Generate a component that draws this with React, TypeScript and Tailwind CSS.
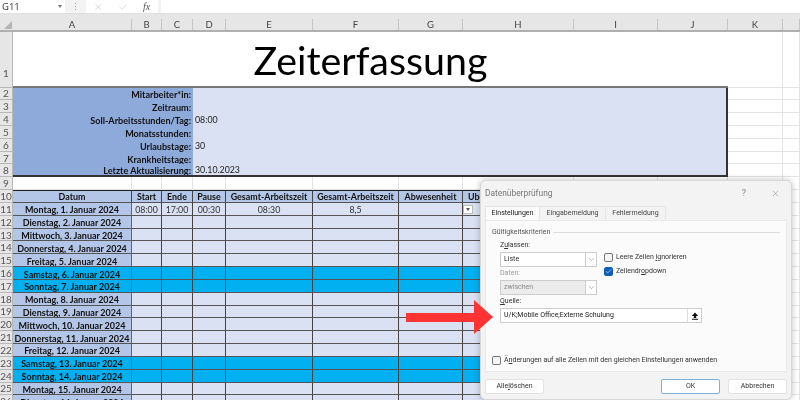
import React from "react";
import { X, Check, ChevronDown } from "lucide-react";

const COLS = "grid grid-cols-[13px_119px_30px_31px_33px_87px_86px_64px_111px_84px_70px_55px_17px]";
const GRID = "border-r border-b border-[#e4e4e4]";

const headers = ["A", "B", "C", "D", "E", "F", "G", "H", "I", "J", "K", ""];
const days = ["Montag", "Dienstag", "Mittwoch", "Donnerstag", "Freitag", "Samstag", "Sonntag"];
const titles = ["Datum", "Start", "Ende", "Pause", "Gesamt-Arbeitszeit", "Gesamt-Arbeitszeit", "Abwesenheit"];
const info: [string, string][] = [
  ["Mitarbeiter*in:", ""],
  ["Zeitraum:", ""],
  ["Soll-Arbeitsstunden/Tag:", "08:00"],
  ["Monatsstunden:", ""],
  ["Urlaubstage:", "30"],
  ["Krankheitstage:", ""],
  ["Letzte Aktualisierung:", "30.10.2023"],
];
const first = ["08:00", "17:00", "00:30", "08:30", "8,5", ""];

function RowHead({ n, className = "" }: { n: number; className?: string }) {
  return (
    <div className={`flex items-center justify-center overflow-hidden border-r border-b border-[#b8b8b8] bg-[#e6e6e6] text-[10px] leading-none text-[#555] ${className}`}>
      {n}
    </div>
  );
}

function Blank() {
  return <div className={GRID} />;
}

function Tail() {
  return (
    <>
      <Blank />
      <Blank />
    </>
  );
}

function InfoRow({ n, label, value, last }: { n: number; label: string; value: string; last: boolean }) {
  const edge = last ? "border-b-2 border-b-[#333]" : "";
  return (
    <div className={`${COLS} h-[12.83px]`}>
      <RowHead n={n} />
      <div className={`col-span-3 flex items-center justify-end overflow-hidden whitespace-nowrap bg-[#8eaadb] pr-[2px] pt-[2px] text-[9.1px] font-bold leading-none text-[#111] ${edge}`}>
        {label}
      </div>
      <div className={`col-span-7 flex items-center overflow-hidden border-r-2 border-r-[#333] bg-[#d9e1f2] pl-[2px] pt-[2px] text-[8.8px] leading-none text-[#222] ${edge}`}>
        {value}
      </div>
      <Tail />
    </div>
  );
}

function DayRow({ index }: { index: number }) {
  const n = index + 11;
  const weekend = index % 7 === 5 || index % 7 === 6;
  const label = `${days[index % 7]}, ${index + 1}. Januar 2024`;
  const bg = weekend ? "bg-[#00b0f0]" : "bg-[#d9e1f2]";
  const vals = index === 0 ? first : ["", "", "", "", "", ""];
  return (
    <div className={`${COLS} h-[12.83px]`}>
      <RowHead n={n} />
      <div className={`flex items-center justify-center overflow-hidden whitespace-nowrap border-r border-r-[#666] border-b border-b-[#555] pt-[2px] text-[9px] font-bold leading-none text-[#111] ${weekend ? "bg-[#00b0f0]" : "bg-[#b4c6e7]"}`}>
        {label}
      </div>
      {vals.map((v, i) => (
        <div key={i} className={`flex items-center justify-center border-r border-r-[#444] border-b border-b-[#555] pt-[3px] text-[8.8px] leading-none text-[#333] ${bg}`}>
          {v}
        </div>
      ))}
      <div className={`relative col-span-3 border-r border-r-[#333] border-b border-b-[#555] ${bg}`}>
        {index === 0 && (
          <div className="absolute left-0 top-[2px] flex h-[9px] w-[10px] items-center justify-center border border-[#bbb] bg-white">
            <div className="h-0 w-0 border-x-[2.5px] border-t-[3px] border-x-transparent border-t-[#555]" />
          </div>
        )}
      </div>
      <Tail />
    </div>
  );
}

function Label({ children, className = "" }: { children: React.ReactNode; className?: string }) {
  return <div className={`whitespace-nowrap text-[7px] leading-none text-[#333] ${className}`}>{children}</div>;
}

function Combo({ text, disabled }: { text: string; disabled?: boolean }) {
  return (
    <div className={`flex h-[15px] w-[97px] items-center border border-[#ccc] ${disabled ? "bg-[#ececec]" : "bg-white"}`}>
      <span className={`flex-1 pl-[3px] text-[7px] leading-none ${disabled ? "text-[#8a8a8a]" : "text-[#333]"}`}>{text}</span>
      <span className="flex h-full w-[11px] items-center justify-center border-l border-[#ccc] bg-white">
        <ChevronDown size={9} strokeWidth={1.2} color="#666" />
      </span>
    </div>
  );
}

function Box({ checked }: { checked?: boolean }) {
  return (
    <span className={`flex h-[9px] w-[9px] shrink-0 items-center justify-center rounded-[2px] border ${checked ? "border-[#0f5fb8] bg-[#0f5fb8]" : "border-[#777] bg-[#f6f6f6]"}`}>
      {checked && <Check size={7} strokeWidth={2} color="white" />}
    </span>
  );
}

function Btn({ children, primary, className = "" }: { children: React.ReactNode; primary?: boolean; className?: string }) {
  return (
    <div className={`flex h-[15px] w-[59px] items-center justify-center rounded-[2px] border bg-white text-[7px] leading-none text-[#333] ${primary ? "border-[#7fb0d8]" : "border-[#e2e2e2]"} ${className}`}>
      {children}
    </div>
  );
}

function Dialog() {
  return (
    <div className="absolute left-[480px] top-[180px] flex h-[220px] w-[312px] flex-col rounded-[6px] border border-[#d8d8d8] bg-[#f3f3f3] px-[4px] font-['Roboto',sans-serif] shadow-[0_0_6px_rgba(0,0,0,0.25)]">
      <div className="flex h-[25px] shrink-0 items-center">
        <span className="flex-1 text-[8.4px] leading-none text-[#777]">Datenüberprüfung</span>
        <span className="mr-[25px] text-[9px] leading-none text-[#888]">?</span>
        <X size={9} strokeWidth={1.2} color="#777" className="mr-[7px]" />
      </div>
      <div className="flex h-[14px] shrink-0 items-center">
        <div className="flex h-[15px] w-[55px] items-center justify-center border-x border-t border-[#e4e4e4] bg-[#fbfbfb] text-[7px] leading-none text-[#222]">Einstellungen</div>
        <div className="flex h-[14px] w-[66px] items-center justify-center border-t border-r border-[#e4e4e4] text-[7px] leading-none text-[#444]">Eingabemeldung</div>
        <div className="flex h-[14px] w-[60px] items-center justify-center border-t border-r border-[#e4e4e4] text-[7px] leading-none text-[#444]">Fehlermeldung</div>
      </div>
      <div className="flex h-[152px] w-[302px] shrink-0 flex-col border border-[#e8e8e8] bg-[#fbfbfb] pl-[6px] pr-[6px] pt-[7px]">
        <div className="flex h-[8px] items-center gap-[3px]">
          <Label className="text-[#555]">Gültigkeitskriterien</Label>
          <div className="h-px flex-1 bg-[#ddd]" />
        </div>
        <div className="ml-[8px] mt-[6px] flex flex-col">
          <div className="flex items-start gap-[7px]">
            <div className="flex w-[97px] flex-col">
              <Label className="h-[10px]">Z<u>u</u>lassen:</Label>
              <Combo text="Liste" />
              <Label className="mt-[3px] h-[10px] text-[#999]">Daten:</Label>
              <Combo text="zwischen" disabled />
            </div>
            <div className="flex flex-col gap-[5px] pt-[11px]">
              <div className="flex items-center gap-[3px]">
                <Box />
                <Label>Leere Zellen <u>i</u>gnorieren</Label>
              </div>
              <div className="flex items-center gap-[3px]">
                <Box checked />
                <Label>Zellendr<u>o</u>pdown</Label>
              </div>
            </div>
          </div>
          <Label className="mt-[3px] h-[10px]"><u>Q</u>uelle:</Label>
          <div className="flex h-[15px] w-[202px] items-center border border-[#ccc] bg-white">
            <span className="flex-1 whitespace-nowrap pl-[3px] text-[7px] leading-none text-[#222]">U/K;Mobile Office;Externe Schulung</span>
            <span className="flex h-[13px] w-[14px] items-center justify-center border-l border-[#ddd]">
              <svg width="8" height="8" viewBox="0 0 8 8">
                <path d="M4 0.5 7.2 4 5.2 4 5.2 6 2.8 6 2.8 4 0.8 4Z M1 6.8H7V7.8H1Z" fill="#111" />
              </svg>
            </span>
          </div>
        </div>
        <div className="mt-[33px] flex items-center gap-[3px]">
          <Box />
          <Label>Ä<u>n</u>derungen auf alle Zellen mit den gleichen Einstellungen anwenden</Label>
        </div>
      </div>
      <div className="mt-[7px] flex w-[302px] items-center">
        <Btn>Alle <u>l</u>öschen</Btn>
        <Btn primary className="ml-auto">OK</Btn>
        <Btn className="ml-[8px]">Abbrechen</Btn>
      </div>
    </div>
  );
}

export default function App() {
  return (
    <div className="relative h-[400px] w-[800px] overflow-hidden bg-white font-['Lato',sans-serif] blur-[0.35px]">
      <div className="flex h-[13px] items-stretch bg-[#f3f3f3] font-['Open_Sans',sans-serif]">
        <div className="flex w-[65px] items-center justify-between bg-white pl-[2px] pr-[3px] text-[9.5px] leading-none text-[#333]">
          G11
          <span className="h-0 w-0 border-x-[2.5px] border-t-[3px] border-x-transparent border-t-[#777]" />
        </div>
        <div className="flex w-[21px] items-center justify-center text-[9px] leading-none text-[#999]">⋮</div>
        <div className="flex w-[72px] items-center gap-[15px] bg-white pl-[2px]">
          <X size={10} strokeWidth={1} color="#aaa" className="ml-[5px]" />
          <Check size={10} strokeWidth={1} color="#aaa" />
          <span className="font-['Liberation_Serif',serif] text-[10px] italic leading-none text-[#555]">fx</span>
        </div>
        <div className="ml-[3px] flex-1 bg-white" />
      </div>

      <div className={`${COLS} h-[19px] border-t border-b-2 border-t-[#e0e0e0] border-b-[#b0b0b0] bg-[#e6e6e6]`}>
        <div className="relative">
          <div className="absolute bottom-[1px] right-[1px] h-0 w-0 border-b-[8px] border-l-[8px] border-b-[#b5b5b5] border-l-transparent" />
        </div>
        {headers.map((h, i) => (
          <div key={i} className="mt-[5px] flex items-center justify-center border-r border-[#c4c4c4] text-[9.5px] leading-none text-[#444]">
            {h}
          </div>
        ))}
      </div>

      <div className={`${COLS} h-[55.5px]`}>
        <RowHead n={1} className="items-end pb-[9px]" />
        <div className="col-span-10 flex items-center justify-center border-b-2 border-b-[#777] pt-[1px] text-[39.4px] leading-none text-black">
          Zeiterfassung
        </div>
        <Tail />
      </div>

      {info.map(([l, v], i) => (
        <InfoRow key={l} n={i + 2} label={l} value={v} last={i === info.length - 1} />
      ))}

      <div className={`${COLS} h-[12.83px]`}>
        <RowHead n={9} />
        {Array.from({ length: 12 }).map((_, i) => (
          <Blank key={i} />
        ))}
      </div>

      <div className={`${COLS} h-[12.83px]`}>
        <RowHead n={10} />
        {titles.map((t, i) => (
          <div key={i} className="flex items-center justify-center overflow-hidden whitespace-nowrap border-t border-r border-b border-t-[#222] border-r-[#444] border-b-[#555] bg-[#b4c6e7] pt-[1px] text-[8.9px] font-bold leading-none text-[#111]">
            {t}
          </div>
        ))}
        <div className="col-span-3 flex items-center overflow-hidden whitespace-nowrap border-t border-r border-b border-t-[#222] border-r-[#333] border-b-[#555] bg-[#b4c6e7] pl-[5px] pt-[1px] text-[8.9px] font-bold leading-none text-[#111]">
          <span className="w-[12px] overflow-hidden">Überstunden</span>
        </div>
        <Tail />
      </div>

      {Array.from({ length: 16 }).map((_, i) => (
        <DayRow key={i} index={i} />
      ))}

      <Dialog />

      <svg className="absolute left-[405px] top-[298px]" width="90" height="38" viewBox="0 0 90 38">
        <path d="M1 15 H69 V2 L88 19 L69 36 V24 H1 Z" fill="#ff3333" />
      </svg>
    </div>
  );
}
